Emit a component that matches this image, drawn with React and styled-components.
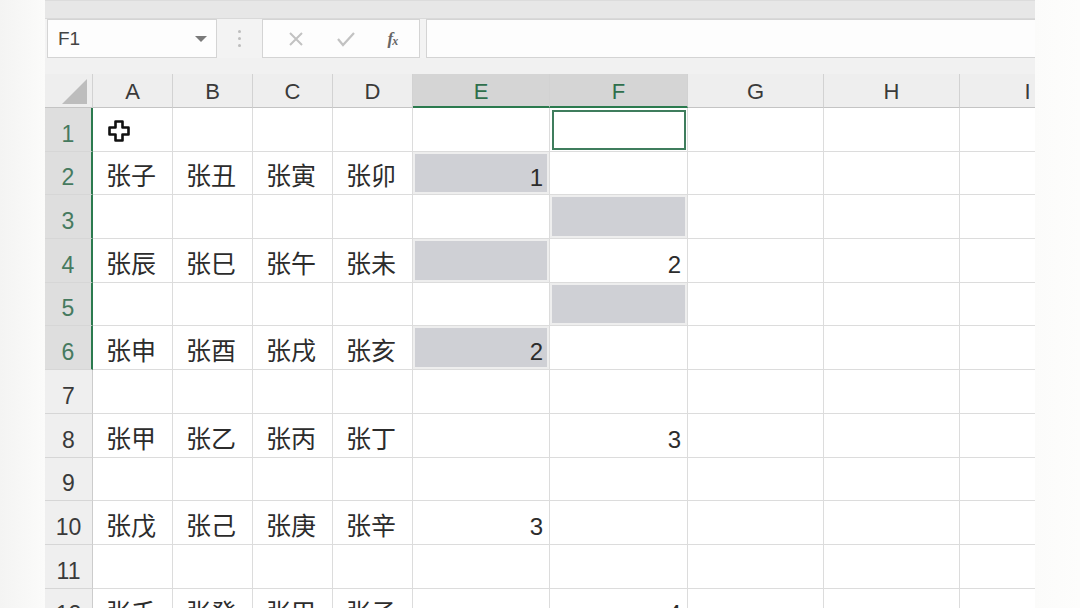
import React from "react";
import styled, { createGlobalStyle, css } from "styled-components";

const GlobalStyle = createGlobalStyle`
  html, body {
    margin: 0;
    padding: 0;
    background: #f9f9f8;
    font-family: "Liberation Sans", "Noto Sans CJK SC", sans-serif;
  }
`;

/* Page frame */
const Page = styled.div`
  display: flex;
  justify-content: center;
  width: 1080px;
  height: 608px;
  overflow: hidden;
  background: linear-gradient(90deg, #f4f4f3 0, #fbfbfa 45px, #fbfbfa 1035px, #fdfdfc 100%);
`;

const Window = styled.div`
  width: 990px;
  height: 608px;
  overflow: hidden;
  display: flex;
  flex-direction: column;
  background: #f1f1f1;
`;

const TopStrip = styled.div`
  height: 17px;
  flex: none;
  background: #e7e7e7;
  border-top: 1px solid #dcdcdc;
  border-bottom: 1px solid #d9d9d9;
`;

/* Formula bar */
const FormulaBar = styled.div`
  display: flex;
  align-items: center;
  height: 39px;
  flex: none;
  padding: 0 0 0 2px;
  margin-bottom: 16px;
  background: #f3f3f3;
`;

const Box = styled.div`
  height: 39px;
  box-sizing: border-box;
  background: #fdfdfd;
  border: 1px solid #d4d4d4;
  display: flex;
  align-items: center;
`;

const NameBox = styled(Box)`
  width: 170px;
  padding: 0 0 0 10px;
  justify-content: space-between;
  font-size: 19px;
  color: #444;
`;

const Caret = styled.span`
  width: 0;
  height: 0;
  margin-right: 9px;
  border-left: 6px solid transparent;
  border-right: 6px solid transparent;
  border-top: 6px solid #7a7a7a;
`;

const Dots = styled.div`
  width: 45px;
  display: flex;
  flex-direction: column;
  align-items: center;
  gap: 4px;
  & span {
    width: 3px;
    height: 3px;
    border-radius: 50%;
    background: #bdbdbd;
  }
`;

const FuncBox = styled(Box)`
  width: 158px;
  justify-content: space-around;
  padding: 0 6px 0 8px;
  margin-right: 6px;
`;

const Fx = styled.span`
  font-family: "Liberation Serif", serif;
  font-style: italic;
  font-weight: bold;
  font-size: 17px;
  color: #666;
  letter-spacing: -1px;
  & sub {
    font-size: 12px;
    vertical-align: -1px;
  }
`;

const FormulaInput = styled(Box)`
  flex: 1;
  border-right: none;
`;

/* Grid */
const Sheet = styled.div`
  display: grid;
  grid-template-columns: 48px 80px 80px 80px 80px 137px 138px 136px 136px 136px;
  grid-template-rows: 34px;
  grid-auto-rows: 43.7px;
  background: #fff;
`;

const ColHead = styled.div`
  display: flex;
  align-items: center;
  justify-content: center;
  padding-top: 3px;
  box-sizing: border-box;
  font-size: 22px;
  color: #3a3a3a;
  background: #eeeeee;
  border-right: 1px solid #d2d2d2;
  border-bottom: 1px solid #c4c4c4;
  ${(p) =>
    p.$selected &&
    css`
      background: #d5d5d5;
      color: #2f6f4c;
      border-bottom: 2px solid #2b7a4e;
    `}
`;

const Corner = styled(ColHead)`
  align-items: flex-end;
  justify-content: flex-end;
  padding: 0 5px 3px 0;
  & svg {
    display: block;
  }
`;

const RowHead = styled.div`
  display: flex;
  align-items: flex-end;
  justify-content: center;
  padding-bottom: 3px;
  box-sizing: border-box;
  font-size: 23px;
  color: #3a3a3a;
  background: #efefef;
  border-right: 1px solid #cccccc;
  border-bottom: 1px solid #d6d6d6;
  ${(p) =>
    p.$selected &&
    css`
      background: #dedede;
      color: #467a5f;
      border-right: 2px solid #2b7a4e;
    `}
`;

const Cell = styled.div`
  display: flex;
  align-items: flex-end;
  justify-content: ${(p) => (p.$num ? "flex-end" : "flex-start")};
  padding: ${(p) => (p.$num ? "0 6px 2px 0" : "0 0 3px 13px")};
  box-sizing: border-box;
  font-size: ${(p) => (p.$num ? "24px" : "25px")};
  line-height: 1.2;
  color: #2c2c2c;
  white-space: nowrap;
  overflow: hidden;
  background: #fff;
  border-right: 1px solid #dcdcdc;
  border-bottom: 1px solid #dcdcdc;
  ${(p) =>
    p.$fill &&
    css`
      background: #cfd0d5;
      box-shadow: inset 0 0 0 2px #eeeeee;
    `}
  ${(p) =>
    p.$active &&
    css`
      outline: 2px solid #3f7d5d;
      outline-offset: -4px;
    `}
  ${(p) =>
    p.$cursor &&
    css`
      align-items: center;
      padding: 4px 0 0 14px;
    `}
`;

const columns = ["A", "B", "C", "D", "E", "F", "G", "H", "I"];
const selectedCols = ["E", "F"];

const rows = [
  { n: 1, names: [], cursor: true, active: "F" },
  { n: 2, names: ["张子", "张丑", "张寅", "张卯"], E: 1, fill: ["E"] },
  { n: 3, names: [], fill: ["F"] },
  { n: 4, names: ["张辰", "张巳", "张午", "张未"], F: 2, fill: ["E"] },
  { n: 5, names: [], fill: ["F"] },
  { n: 6, names: ["张申", "张酉", "张戌", "张亥"], E: 2, fill: ["E"] },
  { n: 7, names: [] },
  { n: 8, names: ["张甲", "张乙", "张丙", "张丁"], F: 3 },
  { n: 9, names: [] },
  { n: 10, names: ["张戊", "张己", "张庚", "张辛"], E: 3 },
  { n: 11, names: [] },
  { n: 12, names: ["张壬", "张癸", "张甲", "张子"], F: 4 },
];

function CrossCursor() {
  return (
    <svg width="24" height="24" viewBox="0 0 24 24">
      <path
        d="M8.5 2.5h7v6h6v7h-6v6h-7v-6h-6v-7h6z"
        fill="#fff"
        stroke="#111"
        strokeWidth="2.6"
        strokeLinejoin="round"
      />
    </svg>
  );
}

function SheetRow({ row }) {
  return (
    <>
      <RowHead $selected={row.n <= 6}>{row.n}</RowHead>
      {columns.map((col, i) => {
        const fill = row.fill && row.fill.includes(col);
        if (i < 4) {
          return (
            <Cell key={col} $cursor={row.cursor && col === "A"}>
              {row.cursor && col === "A" ? <CrossCursor /> : row.names[i]}
            </Cell>
          );
        }
        const value = row[col];
        return (
          <Cell key={col} $num $fill={fill} $active={row.active === col}>
            {value}
          </Cell>
        );
      })}
    </>
  );
}

export default function App() {
  return (
    <Page>
      <GlobalStyle />
      <Window>
        <TopStrip />
        <FormulaBar>
          <NameBox>
            F1
            <Caret />
          </NameBox>
          <Dots>
            <span />
            <span />
            <span />
          </Dots>
          <FuncBox>
            <svg width="18" height="18" viewBox="0 0 18 18">
              <path d="M3 3l12 12M15 3L3 15" stroke="#c2c2c2" strokeWidth="2" />
            </svg>
            <svg width="20" height="18" viewBox="0 0 20 18">
              <path d="M2 9l5 6L18 3" stroke="#c2c2c2" strokeWidth="2.2" fill="none" />
            </svg>
            <Fx>
              f<sub>x</sub>
            </Fx>
          </FuncBox>
          <FormulaInput />
        </FormulaBar>
        <Sheet>
          <Corner>
            <svg width="25" height="25" viewBox="0 0 25 25">
              <path d="M25 0V25H0z" fill="#bdbdbd" />
            </svg>
          </Corner>
          {columns.map((c) => (
            <ColHead key={c} $selected={selectedCols.includes(c)}>
              {c}
            </ColHead>
          ))}
          {rows.map((r) => (
            <SheetRow key={r.n} row={r} />
          ))}
        </Sheet>
      </Window>
    </Page>
  );
}
